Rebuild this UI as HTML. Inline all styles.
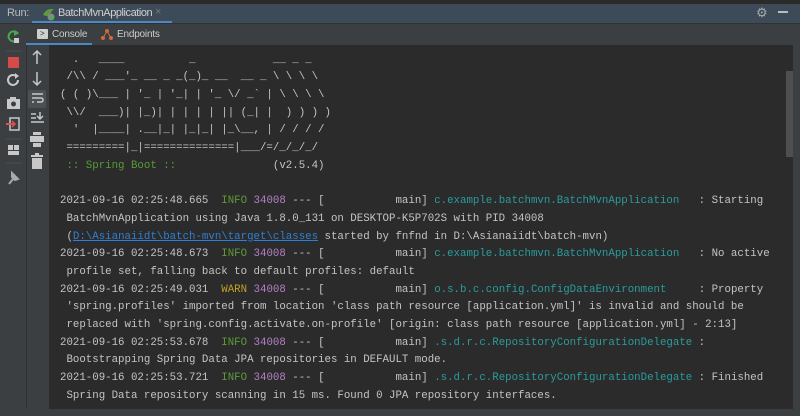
<!DOCTYPE html>
<html><head><meta charset="utf-8"><style>
*{margin:0;padding:0;box-sizing:border-box}
body{width:800px;height:416px;overflow:hidden;background:#3c3f41;font-family:"Liberation Sans",sans-serif;position:relative}
.abs{position:absolute}
pre{font-family:"Liberation Mono",monospace;font-size:10.75px;line-height:17.7px;color:#c4c4c4;white-space:pre}
.g{color:#5f9a3a}.p{color:#b57fc8}.w{color:#c0a02a}.c{color:#2b9c9c}.l{color:#2f7fd6;text-decoration:underline}.sb{color:#5a9a37}
</style></head><body>
<div class="abs" style="left:0;top:0;width:800px;height:4px;background:#2b2b2b"></div>
<div class="abs" style="left:0;top:4px;width:800px;height:19px;background:#3d4a57"></div>
<div class="abs" style="left:7px;top:7px;font-size:11px;color:#bbbbbb;letter-spacing:-0.3px">Run:</div>
<svg class="abs" style="left:42px;top:7px" width="14" height="14"><path d="M1 8 Q4 1 12 2 Q9 4 8 8 Q5 10 1 8z" fill="#5f9a3a"/><circle cx="9" cy="10" r="3.5" fill="#888"/><circle cx="10" cy="11" r="2" fill="#4caf50"/></svg>
<div class="abs" style="left:58px;top:7px;font-size:11px;color:#d0d0d0;letter-spacing:-0.45px">BatchMvnApplication</div>
<div class="abs" style="left:155px;top:6px;font-size:11px;color:#777">×</div>
<div class="abs" style="left:32px;top:21px;width:140px;height:2px;background:#4a88c7"></div>
<div class="abs" style="left:756px;top:5px;font-size:13px;color:#aaa">⚙</div>
<div class="abs" style="left:778px;top:11px;width:10px;height:2px;background:#bbb"></div>
<div class="abs" style="left:0;top:23px;width:800px;height:1px;background:#323232"></div>
<div class="abs" style="left:37px;top:29px;width:11px;height:10px;background:#cfcfcf;border-radius:1px"></div>
<div class="abs" style="left:40px;top:29px;font-size:8px;color:#333">&gt;</div>
<div class="abs" style="left:52px;top:29px;font-size:10px;color:#cccccc;letter-spacing:-0.2px">Console</div>
<svg class="abs" style="left:101px;top:28px" width="12" height="13"><circle cx="6" cy="3" r="2" fill="#d06a3a"/><circle cx="2" cy="10" r="2" fill="#d06a3a"/><circle cx="10" cy="10" r="2" fill="#d06a3a"/><path d="M6 3L2 10M6 3L10 10" stroke="#d06a3a"/></svg>
<div class="abs" style="left:117px;top:29px;font-size:10px;color:#cccccc;letter-spacing:-0.2px">Endpoints</div>
<div class="abs" style="left:26px;top:43px;width:66px;height:2px;background:#4a88c7"></div>
<div class="abs" style="left:26px;top:45px;width:1px;height:371px;background:#2f3133"></div>
<svg class="abs" style="left:0;top:24px" width="50" height="180">
<path d="M18 10 A5 5 0 1 0 17 16" stroke="#49a849" stroke-width="2" fill="none"/><path d="M14 6 L19 9 L14 12z" fill="#49a849"/><rect x="14" y="14" width="5" height="5" fill="#ccc"/>
<line x1="6" y1="27" x2="22" y2="27" stroke="#4a4d50"/>
<rect x="8" y="33" width="11" height="11" fill="#d64a4a"/>
<path d="M18 56 A5 5 0 1 1 16 52" stroke="#c8c8c8" stroke-width="2" fill="none"/><path d="M15 49L19 52L15 55z" fill="#c8c8c8"/>
<rect x="7" y="75" width="13" height="10" fill="#c8c8c8"/><rect x="10" y="73" width="6" height="3" fill="#c8c8c8"/><circle cx="13.5" cy="80" r="2.5" fill="#3c3f41"/>
<rect x="10" y="94" width="9" height="12" fill="none" stroke="#c8c8c8" stroke-width="1.5"/><path d="M6 100H14" stroke="#e05050" stroke-width="2"/><path d="M12 97L15 100L12 103" stroke="#e05050" stroke-width="1.5" fill="none"/>
<line x1="6" y1="115" x2="22" y2="115" stroke="#4a4d50"/>
<rect x="8" y="121" width="5" height="5" fill="#c8c8c8"/><rect x="14" y="121" width="5" height="5" fill="#c8c8c8"/><rect x="8" y="127" width="11" height="4" fill="#c8c8c8"/>
<line x1="6" y1="139" x2="22" y2="139" stroke="#4a4d50"/>
<path d="M9 160L13 155M12 149L18 155L15 156L12 153z" stroke="#aaa" stroke-width="2" fill="#aaa"/>
<path d="M37 27V40M33 31L37 27L41 31" stroke="#c8c8c8" stroke-width="1.5" fill="none"/>
<path d="M37 48V61M33 57L37 61L41 57" stroke="#c8c8c8" stroke-width="1.5" fill="none"/>
<rect x="28" y="66" width="18" height="18" rx="2" fill="#4c5052"/>
<path d="M32 70H43M32 74H41A2 2 0 0 1 41 78H37M32 78H34" stroke="#c8c8c8" stroke-width="1.5" fill="none"/>
<path d="M31 90H36M31 94H36M31 98H44M40 88V95M37 92L40 95L43 92" stroke="#c8c8c8" stroke-width="1.5" fill="none"/>
<rect x="30" y="112" width="14" height="6" fill="#c8c8c8"/><rect x="33" y="108" width="8" height="3" fill="#c8c8c8"/><rect x="33" y="119" width="8" height="4" fill="#c8c8c8"/>
<rect x="31" y="131" width="12" height="2" fill="#c8c8c8"/><rect x="32" y="134" width="10" height="11" fill="#c8c8c8"/><rect x="35" y="129" width="4" height="2" fill="#c8c8c8"/>
</svg>
<div class="abs" style="left:49px;top:45px;width:744px;height:364px;background:#2b2b2b"></div>
<div class="abs" style="left:786px;top:71px;width:7px;height:86px;background:#4d4f51"></div>
<div class="abs" style="left:0;top:409px;width:800px;height:7px;background:#3c3f41"></div>
<pre class="abs" style="left:60px;top:51.5px">  .   ____          _            __ _ _
 /\\ / ___'_ __ _ _(_)_ __  __ _ \ \ \ \
( ( )\___ | '_ | '_| | '_ \/ _` | \ \ \ \
 \\/  ___)| |_)| | | | | || (_| |  ) ) ) )
  '  |____| .__|_| |_|_| |_\__, | / / / /
 =========|_|==============|___/=/_/_/_/
<span class="sb"> :: Spring Boot :: </span>              (v2.5.4)

2021-09-16 02:25:48.665  <span class="g">INFO</span> <span class="p">34008</span> --- [           main] <span class="c">c.example.batchmvn.BatchMvnApplication</span>   : Starting
 BatchMvnApplication using Java 1.8.0_131 on DESKTOP-K5P702S with PID 34008
 (<span class="l">D:\Asianaiidt\batch-mvn\target\classes</span> started by fnfnd in D:\Asianaiidt\batch-mvn)
2021-09-16 02:25:48.673  <span class="g">INFO</span> <span class="p">34008</span> --- [           main] <span class="c">c.example.batchmvn.BatchMvnApplication</span>   : No active
 profile set, falling back to default profiles: default
2021-09-16 02:25:49.031  <span class="w">WARN</span> <span class="p">34008</span> --- [           main] <span class="c">o.s.b.c.config.ConfigDataEnvironment</span>     : Property
 'spring.profiles' imported from location 'class path resource [application.yml]' is invalid and should be
 replaced with 'spring.config.activate.on-profile' [origin: class path resource [application.yml] - 2:13]
2021-09-16 02:25:53.678  <span class="g">INFO</span> <span class="p">34008</span> --- [           main] <span class="c">.s.d.r.c.RepositoryConfigurationDelegate</span> :
 Bootstrapping Spring Data JPA repositories in DEFAULT mode.
2021-09-16 02:25:53.721  <span class="g">INFO</span> <span class="p">34008</span> --- [           main] <span class="c">.s.d.r.c.RepositoryConfigurationDelegate</span> : Finished
 Spring Data repository scanning in 15 ms. Found 0 JPA repository interfaces.</pre>
</body></html>
